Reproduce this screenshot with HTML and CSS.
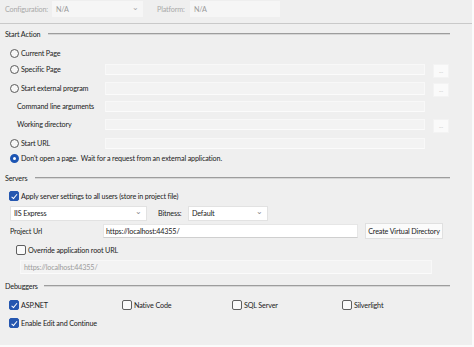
FILE: index.html
```html
<!DOCTYPE html>
<html>
<head>
<meta charset="utf-8">
<link rel="stylesheet" href="styles.css">
</head>
<body>
<div class="panel">
  <div class="topbar">
    <span class="dim-label">Configuration:</span>
    <div class="dim-select cfg"><span>N/A</span><span class="chev">&#8964;</span></div>
    <span class="dim-label plat-label">Platform:</span>
    <div class="dim-select plat"><span>N/A</span></div>
  </div>
  <div class="sep"></div>

  <div class="row hdr m3"><span>Start Action</span><div class="hline l48"></div></div>

  <div class="row m5"><span class="radio"></span><span class="lbl">Current Page</span></div>
  <div class="row m2"><span class="radio"></span><span class="lbl">Specific Page</span><div class="dinput"></div><div class="dots">...</div></div>
  <div class="row m5"><span class="radio"></span><span class="lbl">Start external program</span><div class="dinput tall"></div><div class="dots">...</div></div>
  <div class="row m4 sub"><span class="lbl2">Command line arguments</span><div class="dinput"></div><div class="nodots"></div></div>
  <div class="row m4 sub"><span class="lbl2">Working directory</span><div class="dinput"></div><div class="dots">...</div></div>
  <div class="row m5"><span class="radio"></span><span class="lbl">Start URL</span><div class="dinput"></div><div class="nodots"></div></div>
  <div class="row m1"><span class="radio on"></span><span class="lbl">Don't open a page.&nbsp; Wait for a request from an external application.</span></div>

  <div class="row hdr m6"><span>Servers</span><div class="hline l35"></div></div>

  <div class="row m4"><span class="check on"></span><span class="lbl">Apply server settings to all users (store in project file)</span></div>
  <div class="row m3 ind">
    <div class="select iis"><span>IIS Express</span><span class="chev">&#8964;</span></div>
    <span class="bit-label">Bitness:</span>
    <div class="select bit"><span>Default</span><span class="chev">&#8964;</span></div>
  </div>
  <div class="row m4 ind">
    <span class="url-label">Project Url</span>
    <div class="tinput">https://localhost:44355/</div>
    <div class="btn">Create Virtual Directory</div>
  </div>
  <div class="row m5 ind2"><span class="check"></span><span class="lbl">Override application root URL</span></div>
  <div class="row m3 ind3"><div class="dinput root">https://localhost:44355/</div></div>

  <div class="row hdr m5"><span>Debuggers</span><div class="hline l44"></div></div>

  <div class="row m5 dbg">
    <div class="cell first"><span class="check on"></span><span class="lbl">ASP.NET</span></div>
    <div class="cell"><span class="check"></span><span class="lbl">Native Code</span></div>
    <div class="cell"><span class="check"></span><span class="lbl">SQL Server</span></div>
    <div class="cell"><span class="check"></span><span class="lbl">Silverlight</span></div>
  </div>
  <div class="row m4"><span class="check on"></span><span class="lbl">Enable Edit and Continue</span></div>
</div>
</body>
</html>
```

FILE: styles.css
```css
html, body {
  margin: 0;
  padding: 0;
  background: #fbfbfb;
}
body {
  width: 474px;
  height: 347px;
  overflow: hidden;
  font-family: Lato, "Noto Sans", sans-serif;
  font-size: 7.2px;
  letter-spacing: -0.15px;
  color: #222222;
}
.panel {
  width: 472px;
  height: 345px;
  background: #efefef;
  overflow: hidden;
}
.topbar {
  height: 18px;
  display: flex;
  align-items: center;
  padding-left: 5px;
}
.dim-label {
  color: #a9a9a9;
  width: 47px;
  flex: none;
  white-space: nowrap;
}
.plat-label {
  margin-left: 14px;
  width: 33px;
}
.dim-select {
  height: 16px;
  background: #f6f6f6;
  display: flex;
  align-items: center;
  justify-content: space-between;
  padding: 0 4px;
  box-sizing: border-box;
  color: #9a9a9a;
  flex: none;
}
.dim-select.cfg { width: 91px; }
.dim-select.plat { width: 90px; }
.chev {
  color: #a8a8a8;
  font-size: 8px;
  line-height: 8px;
  margin-top: -4px;
}
.sep {
  margin-top: 5px;
  height: 1px;
  background: #c9c9c9;
}
.row {
  height: 14px;
  display: flex;
  align-items: center;
  padding-left: 9px;
  white-space: nowrap;
}
.m1 { margin-top: 1px; }
.m2 { margin-top: 2px; }
.m3 { margin-top: 3px; }
.m4 { margin-top: 4px; }
.m5 { margin-top: 5px; }
.m6 { margin-top: 6px; }

.hdr { padding-left: 5px; }
.hline {
  height: 1px;
  background: #9d9d9d;
  border-bottom: 1px solid #d6d6d6;
  margin-left: auto;
  margin-right: 22px;
  flex: none;
}
.l48 { width: 402px; }
.l35 { width: 415px; }
.l44 { width: 406px; }

.radio {
  width: 7px;
  height: 7px;
  border: 1px solid #5a5a5a;
  border-radius: 50%;
  box-sizing: content-box;
  background: #f7f7f7;
  flex: none;
  margin-left: 1px;
}
.radio.on {
  background: #ffffff;
  border: 3px solid #1d55b3;
  width: 3px;
  height: 3px;
}
.lbl { margin-left: 2px; flex: none; }
.check {
  width: 8px;
  height: 8px;
  border: 1px solid #5f5f5f;
  border-radius: 2px;
  background: #fafafa;
  flex: none;
  position: relative;
}
.check.on {
  background: #2557b0;
  border-color: #2557b0;
}
.check.on::after {
  content: "";
  position: absolute;
  left: 2.5px;
  top: 0.5px;
  width: 2px;
  height: 4.5px;
  border: solid #fff;
  border-width: 0 1px 1px 0;
  transform: rotate(40deg);
}

.dinput {
  height: 11px;
  background: #f3f3f3;
  border: 1px solid #f8f8f8;
  border-bottom-color: #fbfbfb;
  box-sizing: border-box;
  width: 320px;
  margin-left: auto;
  flex: none;
}
.dinput.tall { height: 13px; }
.dots {
  width: 16px;
  height: 14px;
  margin-left: 8px;
  margin-right: 23px;
  margin-top: 3px;
  background: #fafafa;
  border: 1px solid #f3f3f3;
  box-sizing: border-box;
  color: #c0c0c0;
  font-size: 6px;
  display: flex;
  justify-content: center;
  align-items: center;
  line-height: 6px;
  flex: none;
}
.nodots {
  width: 16px;
  margin-left: 8px;
  margin-right: 23px;
  flex: none;
}
.sub { padding-left: 17px; }
.lbl2 { flex: none; }

.ind { padding-left: 10px; }
.select {
  height: 15px;
  background: #ffffff;
  border: 1px solid #e2e2e2;
  box-sizing: border-box;
  display: flex;
  align-items: center;
  justify-content: space-between;
  padding: 0 4px 0 3px;
  flex: none;
}
.select .chev { color: #8a8a8a; }
.iis { width: 137px; }
.bit-label { margin-left: 11px; width: 30px; flex: none; }
.bit { width: 80px; }
.url-label { width: 93px; flex: none; }
.tinput {
  width: 255px;
  height: 14px;
  background: #ffffff;
  border: 1px solid #e6e6e6;
  border-bottom-color: #cfcfcf;
  box-sizing: border-box;
  padding-left: 2px;
  display: flex;
  align-items: center;
  flex: none;
}
.btn {
  margin-left: 7px;
  width: 78px;
  height: 16px;
  background: #fbfbfb;
  border: 1px solid #e0e0e0;
  box-sizing: border-box;
  display: flex;
  align-items: center;
  justify-content: center;
  flex: none;
}
.ind2 { padding-left: 16px; }
.ind3 { padding-left: 20px; }
.dinput.root {
  width: 412px;
  height: 14px;
  margin-left: 0;
  color: #9c9c9c;
  display: flex;
  align-items: center;
  padding-left: 3px;
}
.dbg { padding-left: 9px; }
.cell {
  width: 110px;
  display: flex;
  align-items: center;
  flex: none;
}
.cell.first { width: 113px; }
```
